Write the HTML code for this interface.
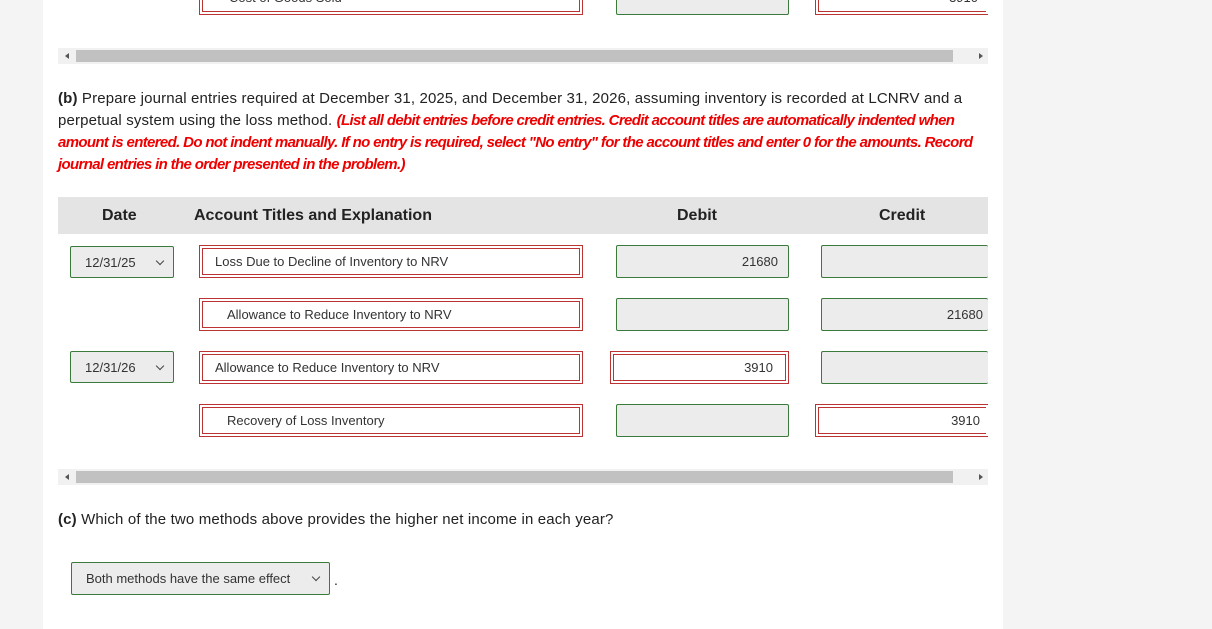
<!DOCTYPE html><html><head><style>
body{margin:0;width:1212px;height:629px;background:#f4f4f4;font-family:"Liberation Sans",sans-serif;color:#222;position:relative;overflow:hidden}
.main{position:absolute;left:43px;top:0;width:960px;height:629px;background:#fff}
.a{position:absolute;box-sizing:border-box}
.red{border:1px solid #b33;padding:2px}
.red>div{border:1px solid #b33;height:100%;box-sizing:border-box;font-size:13px;color:#333;line-height:26px;padding-left:12px;background:#fff}
.grn{border:1px solid #3a7a3a;background:#ececec;border-radius:2px;font-size:13px;color:#333;line-height:32px;text-align:right;padding-right:10px}
.sel{border:1px solid #3a7a3a;background:#ececec;border-radius:2px;font-size:13px;color:#333;line-height:31px;padding-left:14px}
.sel:after{content:"";position:absolute;right:10px;top:11px;width:5px;height:5px;border-right:1.5px solid #444;border-bottom:1.5px solid #444;transform:rotate(45deg)}
.sb{position:absolute;left:58px;width:930px;height:16px;background:#f1f1f1}
.sb i{position:absolute;left:18px;right:35px;top:2px;height:12px;background:#c1c1c1}
.sb b{position:absolute;top:5px;width:0;height:0;border-top:3px solid transparent;border-bottom:3px solid transparent}
.q{white-space:nowrap;font-size:15px;line-height:22px;letter-spacing:0.15px}
.q i{color:#e00;font-weight:bold;letter-spacing:-0.65px}
</style></head><body>
<div class="main"></div>
<div class="a red" style="left:199px;top:-17px;width:384px;height:32px"><div style="padding-left:26px;line-height:22px">Cost of Goods Sold</div></div>
<div class="a grn" style="left:616px;top:-17px;width:173px;height:32px"></div>
<div class="a red" style="left:815px;top:-17px;width:173px;height:32px;border-right:none"><div style="text-align:right;padding-right:8px;line-height:22px;border-right:none">3910</div></div>
<div class="sb" style="top:48px"><i></i><b style="left:7px;border-right:4px solid #555"></b><b style="right:5px;border-left:4px solid #555"></b></div>
<div class="a q" style="left:58px;top:88px;width:930px">
<b>(b)</b> Prepare journal entries required at December 31, 2025, and December 31, 2026, assuming inventory is recorded at LCNRV and a<br>perpetual system using the loss method. <i>(List all debit entries before credit entries. Credit account titles are automatically indented when<br>amount is entered. Do not indent manually. If no entry is required, select "No entry" for the account titles and enter 0 for the amounts. Record<br>journal entries in the order presented in the problem.)</i></div>
<div class="a" style="left:58px;top:197px;width:930px;height:37px;background:#e4e4e4;font-weight:bold;font-size:16px;line-height:37px">
<span style="position:absolute;left:44px">Date</span><span style="position:absolute;left:136px">Account Titles and Explanation</span><span style="position:absolute;left:619px">Debit</span><span style="position:absolute;left:821px">Credit</span></div>
<div class="a sel" style="left:70px;top:246px;width:104px;height:32px">12/31/25</div>
<div class="a red" style="left:199px;top:245px;width:384px;height:33px"><div>Loss Due to Decline of Inventory to NRV</div></div>
<div class="a grn" style="left:616px;top:245px;width:173px;height:33px">21680</div>
<div class="a grn" style="left:821px;top:245px;width:167px;height:33px;border-right:none"></div>
<div class="a red" style="left:199px;top:298px;width:384px;height:33px"><div style="padding-left:24px">Allowance to Reduce Inventory to NRV</div></div>
<div class="a grn" style="left:616px;top:298px;width:173px;height:33px"></div>
<div class="a grn" style="left:821px;top:298px;width:167px;height:33px;border-right:none;padding-right:5px">21680</div>
<div class="a sel" style="left:70px;top:351px;width:104px;height:32px">12/31/26</div>
<div class="a red" style="left:199px;top:351px;width:384px;height:33px"><div>Allowance to Reduce Inventory to NRV</div></div>
<div class="a red" style="left:610px;top:351px;width:179px;height:33px"><div style="text-align:right;padding-right:12px">3910</div></div>
<div class="a grn" style="left:821px;top:351px;width:167px;height:33px;border-right:none"></div>
<div class="a red" style="left:199px;top:404px;width:384px;height:33px"><div style="padding-left:24px">Recovery of Loss Inventory</div></div>
<div class="a grn" style="left:616px;top:404px;width:173px;height:33px"></div>
<div class="a red" style="left:815px;top:404px;width:173px;height:33px;border-right:none"><div style="text-align:right;padding-right:6px;border-right:none">3910</div></div>
<div class="sb" style="top:469px"><i></i><b style="left:7px;border-right:4px solid #555"></b><b style="right:5px;border-left:4px solid #555"></b></div>
<div class="a q" style="left:58px;top:509px"><b>(c)</b> Which of the two methods above provides the higher net income in each year?</div>
<div class="a sel" style="left:71px;top:562px;width:259px;height:33px;padding-left:14px">Both methods have the same effect</div>
<div class="a" style="left:334px;top:572px;font-size:14px">.</div>
</body></html>
